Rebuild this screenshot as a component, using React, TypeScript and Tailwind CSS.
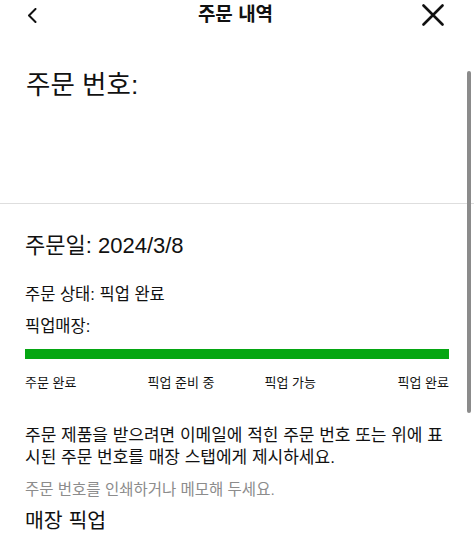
import React from 'react';

const steps = [
  { label: '주문 완료', cls: '' },
  { label: '픽업 준비 중', cls: 'ml-[71px]' },
  { label: '픽업 가능', cls: 'ml-[50px]' },
  { label: '픽업 완료', cls: 'ml-auto' },
];

export default function App() {
  return (
    <div className="relative w-[474px] h-[555px] overflow-hidden bg-white text-[#111] font-['Liberation_Sans','Noto_Sans_CJK_KR',sans-serif]">
      {/* Header */}
      <div className="flex items-center h-[30px] pl-[27px] pr-[30px]">
        <div className="w-[22px]">
          <svg width="10" height="15" viewBox="0 0 10 15" fill="none">
            <path d="M8.5 1 L2 7.5 L8.5 14" stroke="#111" strokeWidth="2" strokeLinecap="round" strokeLinejoin="round" />
          </svg>
        </div>
        <div className="flex-1 text-center text-[19px] font-semibold leading-[30px]">주문 내역</div>
        <svg width="22" height="22" viewBox="0 0 22 22" fill="none">
          <path d="M1.5 1.5 L20.5 20.5 M20.5 1.5 L1.5 20.5" stroke="#111" strokeWidth="2.6" strokeLinecap="round" />
        </svg>
      </div>

      {/* Order number */}
      <div className="h-[174px] border-b border-[#dedede] px-[26px] pt-[39px]">
        <div className="text-[26.5px] leading-[32px]">주문 번호:</div>
      </div>

      {/* Details */}
      <div className="px-[25px] flex flex-col">
        <div className="mt-[28px] text-[22px] leading-[28px]">주문일: 2024/3/8</div>
        <div className="mt-[23px] text-[16.5px] leading-[22px]">주문 상태: 픽업 완료</div>
        <div className="mt-[10px] text-[16.5px] leading-[22px]">픽업매장:</div>
        <div className="mt-[12px] h-[10px] w-full bg-[#05a612]" />
        <div className="mt-[15px] flex text-[13px] leading-[18px]">
          {steps.map((s) => (
            <span key={s.label} className={s.cls}>{s.label}</span>
          ))}
        </div>
        <p className="mt-[33px] text-[17px] leading-[22px]">
          주문 제품을 받으려면 이메일에 적힌 주문 번호 또는 위에 표시된 주문 번호를 매장 스탭에게 제시하세요.
        </p>
        <div className="mt-[11px] text-[15.5px] leading-[20px] text-[#8c8c8c]">주문 번호를 인쇄하거나 메모해 두세요.</div>
        <div className="mt-[8px] text-[20.5px] leading-[26px]">매장 픽업</div>
      </div>

      {/* Scroll indicator */}
      <div className="absolute right-[3px] top-[71px] h-[342px] w-[4px] rounded-full bg-[#8b8b8b]" />
    </div>
  );
}
